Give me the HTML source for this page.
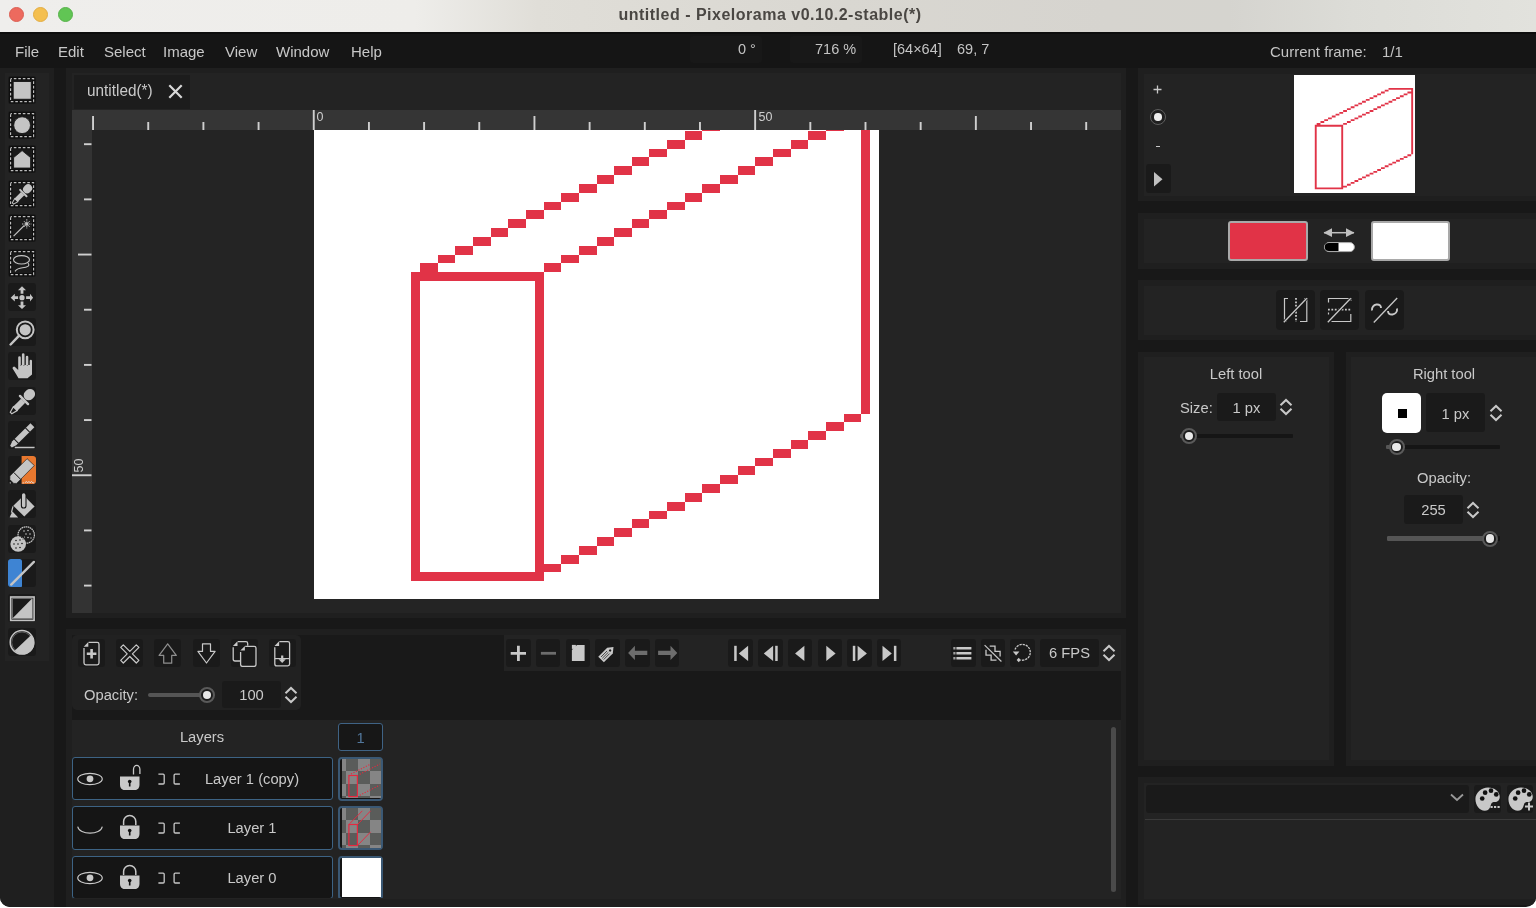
<!DOCTYPE html>
<html><head><meta charset="utf-8">
<style>
*{box-sizing:border-box;margin:0;padding:0}
html,body{width:1536px;height:908px;overflow:hidden;background:#fff;font-family:"Liberation Sans",sans-serif}
.a{position:absolute}
#win{will-change:transform;left:0;top:0;width:1536px;height:906.5px;background:#181818;border-radius:0 0 10px 10px;overflow:hidden}
#title{left:0;top:0;width:1536px;height:32px;background:linear-gradient(90deg,#efeeec 0%,#eeedea 27%,#e0ded8 35%,#d9d7d1 55%,#d6d4cf 72%,#d5d4cf 80%,#dcdcd7 88%,#e2e2dd 100%)}
.tl{top:7px;width:15px;height:15px;border-radius:50%}
#ttext{left:0;top:6px;width:1540px;text-align:center;font-weight:bold;font-size:16px;letter-spacing:0.5px;color:#4a4743}
#menu{left:0;top:32px;width:1536px;height:36px;background:#151515;border-top:2px solid #0d0d0d}
.mi{top:43px;font-size:15px;color:#c8c8c8}
.st{top:41px;font-size:14.5px;color:#c4c4c4}
.pan{background:#1f1f1f}
.inn{background:#232323}
.tb{width:28px;height:28px;background:#1a1a1a;border-radius:3px;overflow:hidden}
.tb svg{display:block}
.bt{background:#1a1a1a;border-radius:3px}
.bt svg{display:block}
.txt{color:#c9c9c9;font-size:15.5px;transform:scaleX(0.95);transform-origin:0 0;white-space:nowrap}
</style></head><body>
<div id="win" class="a">
  <div id="title" class="a"></div>
  <div class="a tl" style="left:8.5px;background:#ed6a5e;border:1px solid #dc5f53"></div>
  <div class="a tl" style="left:33px;background:#f4bf4f;border:1px solid #e3ad43"></div>
  <div class="a tl" style="left:58px;background:#61c554;border:1px solid #57b34a"></div>
  <div id="ttext" class="a">untitled - Pixelorama v0.10.2-stable(*)</div>
  <div id="menu" class="a"></div>
  <div class="a" style="left:690px;top:36px;width:72px;height:27px;background:#181818;border-radius:3px"></div>
  <div class="a" style="left:790px;top:36px;width:72px;height:27px;background:#181818;border-radius:3px"></div>
  <div class="a mi" style="left:15px">File</div>
  <div class="a mi" style="left:58px">Edit</div>
  <div class="a mi" style="left:104px">Select</div>
  <div class="a mi" style="left:163px">Image</div>
  <div class="a mi" style="left:225px">View</div>
  <div class="a mi" style="left:276px">Window</div>
  <div class="a mi" style="left:351px">Help</div>
  <div class="a st" style="left:738px">0 °</div>
  <div class="a st" style="left:815px">716 %</div>
  <div class="a st" style="left:893px">[64×64]</div>
  <div class="a st" style="left:957px">69, 7</div>
  <div class="a st" style="left:1270px;top:43px;font-size:15px">Current frame:</div>
  <div class="a st" style="left:1382px;top:43px;font-size:15px">1/1</div>

  <!-- tool panel -->
  <div class="a pan" style="left:0;top:68px;width:54px;height:840px"></div>
  <div class="a inn" style="left:5px;top:73px;width:44.4px;height:587.7px"></div>

<div class="a tb" style="left:8px;top:76.0px"><svg width="28" height="28" viewBox="0 0 28 28"><rect x="2.6" y="2.6" width="23" height="23" fill="none" stroke="#0e0e0e" stroke-width="3.2"/><rect x="2.6" y="2.6" width="23" height="23" fill="none" stroke="#bdbdbd" stroke-width="1.15" stroke-dasharray="2.6 1.9" stroke-dashoffset="1.3"/><rect x="5.2" y="5.6" width="18" height="17.6" fill="#c4c4c4" stroke="#0e0e0e" stroke-width="0.8"/></svg></div>
<div class="a tb" style="left:8px;top:110.5px"><svg width="28" height="28" viewBox="0 0 28 28"><rect x="2.6" y="2.6" width="23" height="23" fill="none" stroke="#0e0e0e" stroke-width="3.2"/><rect x="2.6" y="2.6" width="23" height="23" fill="none" stroke="#bdbdbd" stroke-width="1.15" stroke-dasharray="2.6 1.9" stroke-dashoffset="1.3"/><circle cx="14.1" cy="14.2" r="8.4" fill="#c4c4c4" stroke="#0e0e0e" stroke-width="0.8"/></svg></div>
<div class="a tb" style="left:8px;top:145.0px"><svg width="28" height="28" viewBox="0 0 28 28"><rect x="2.6" y="2.6" width="23" height="23" fill="none" stroke="#0e0e0e" stroke-width="3.2"/><rect x="2.6" y="2.6" width="23" height="23" fill="none" stroke="#bdbdbd" stroke-width="1.15" stroke-dasharray="2.6 1.9" stroke-dashoffset="1.3"/><path d="M5.6 23V12.6L14.1 5.6L22.6 12.6V23Z" fill="#c4c4c4" stroke="#0e0e0e" stroke-width="0.8"/></svg></div>
<div class="a tb" style="left:8px;top:179.5px"><svg width="28" height="28" viewBox="0 0 28 28"><rect x="2.6" y="2.6" width="23" height="23" fill="none" stroke="#0e0e0e" stroke-width="3.2"/><rect x="2.6" y="2.6" width="23" height="23" fill="none" stroke="#bdbdbd" stroke-width="1.15" stroke-dasharray="2.6 1.9" stroke-dashoffset="1.3"/><g transform="translate(4.6 23.8) rotate(-45) scale(0.8)"><path d="M0.6 -1.1L6.6 -2.7V2.7L0.6 1.1Z" fill="none" stroke="#c4c4c4" stroke-width="1.2"/><rect x="6.4" y="-2.9" width="11.4" height="5.8" fill="#c4c4c4"/><rect x="17.7" y="-6.9" width="2.5" height="13.8" rx="1.2" fill="#c4c4c4"/><rect x="20.6" y="-5" width="11.9" height="10" rx="4.9" fill="#c4c4c4"/></g></svg></div>
<div class="a tb" style="left:8px;top:214.0px"><svg width="28" height="28" viewBox="0 0 28 28"><rect x="2.6" y="2.6" width="23" height="23" fill="none" stroke="#0e0e0e" stroke-width="3.2"/><rect x="2.6" y="2.6" width="23" height="23" fill="none" stroke="#bdbdbd" stroke-width="1.15" stroke-dasharray="2.6 1.9" stroke-dashoffset="1.3"/><path d="M5.6 22.2L16.4 11.4" stroke="#c4c4c4" stroke-width="1.2"/><path d="M18.8 5.2v9.6M14 10h9.6" stroke="#c4c4c4" stroke-width="1" stroke-dasharray="1.4 .9"/><circle cx="18.8" cy="10" r="1.7" fill="#c4c4c4"/><path d="M15.8 7l6 6M21.8 7l-6 6" stroke="#c4c4c4" stroke-width=".8"/></svg></div>
<div class="a tb" style="left:8px;top:248.5px"><svg width="28" height="28" viewBox="0 0 28 28"><rect x="2.6" y="2.6" width="23" height="23" fill="none" stroke="#0e0e0e" stroke-width="3.2"/><rect x="2.6" y="2.6" width="23" height="23" fill="none" stroke="#bdbdbd" stroke-width="1.15" stroke-dasharray="2.6 1.9" stroke-dashoffset="1.3"/><ellipse cx="13.5" cy="10.8" rx="8" ry="4.2" fill="none" stroke="#c4c4c4" stroke-width="1.1"/><path d="M20 14c2.5 3-1 4.3-5.5 4.8c-3.5.4-6 1.6-7.5 3.5" fill="none" stroke="#c4c4c4" stroke-width="1.1"/></svg></div>
<div class="a tb" style="left:8px;top:283.0px"><svg width="28" height="28" viewBox="0 0 28 28"><path d="M14 3.3L18 7.2H15.4V10.8H12.6V7.2H10z M14 26.1L18 22.2H15.4V18.4H12.6V22.2H10z M2.7 14.7L6.8 10.8V13.3H10.1V16.1H6.8V18.6z M25.1 14.7L22 10.8V13.3H18.1V16.1H22V18.6z" fill="#c4c4c4"/><circle cx="14" cy="14.7" r="2.6" fill="#c4c4c4"/></svg></div>
<div class="a tb" style="left:8px;top:317.5px"><svg width="28" height="28" viewBox="0 0 28 28"><path d="M2.6 26.5L11.1 17.6" stroke="#c4c4c4" stroke-width="2.5" stroke-linecap="round"/><circle cx="17.2" cy="11.8" r="8.4" fill="none" stroke="#c4c4c4" stroke-width="2"/><circle cx="17.2" cy="11.8" r="5.6" fill="#c4c4c4"/></svg></div>
<div class="a tb" style="left:8px;top:352.0px"><svg width="28" height="28" viewBox="0 0 28 28"><path d="M10.2 13V5.5a1.3 1.3 0 0 1 2.6 0V13h1.1V2.6a1.3 1.3 0 0 1 2.6 0V13h1.3V5a1.25 1.25 0 0 1 2.5 0V13h1.4V9a1.15 1.15 0 0 1 2.3 0V22.5L19.5 26.2H10.5L8 22L4.6 16.6a1.5 1.5 0 0 1 2.4-1.6L10.2 18Z" fill="#c4c4c4"/><path d="M12.8 13v1M15.9 13v1M19.3 13v1" stroke="#181818" stroke-width=".5"/></svg></div>
<div class="a tb" style="left:8px;top:386.5px"><svg width="28" height="28" viewBox="0 0 28 28"><g transform="translate(2.6 26.4) rotate(-45) scale(1.0)"><path d="M0.6 -1.1L6.6 -2.7V2.7L0.6 1.1Z" fill="none" stroke="#c4c4c4" stroke-width="1.2"/><rect x="6.4" y="-2.9" width="11.4" height="5.8" fill="#c4c4c4"/><rect x="17.7" y="-6.9" width="2.5" height="13.8" rx="1.2" fill="#c4c4c4"/><rect x="20.6" y="-5" width="11.9" height="10" rx="4.9" fill="#c4c4c4"/></g></svg></div>
<div class="a tb" style="left:8px;top:421.0px"><svg width="28" height="28" viewBox="0 0 28 28"><g transform="translate(3 25.6) rotate(-45)"><path d="M0 -1.2L4.6 -2.8H30.3V2.8H4.6L0 1.2Z" fill="#c4c4c4"/><path d="M7.7 -3v6M23.4 -3v6" stroke="#181818" stroke-width="1"/></g><path d="M6.8 26.5h19.8" stroke="#c4c4c4" stroke-width="1.7"/></svg></div>
<div class="a tb" style="left:8px;top:455.5px"><svg width="28" height="28" viewBox="0 0 28 28"><path d="M13.6 0h12.4a2.5 2.5 0 0 1 2.5 2.5V26a2.5 2.5 0 0 1-2.5 2.5H13.6z" fill="#e8782f"/><path d="M19.1 2.7L26.3 9.5L8.6 27.4H5.7L1.9 23.6V20Z" fill="#c4c4c4" stroke="#141414" stroke-width=".6"/><path d="M5.7 16.4L12.6 23.3" stroke="#141414" stroke-width="1"/><path d="M14.5 26.9h1.4M17 26.9l1.3-1.5l1.3 1.5l1.3-1.5l1.3 1.5l1.3-1.5l1.3 1.5h1.5" fill="none" stroke="#e0e0e0" stroke-width=".9"/><circle cx="2.3" cy="26.9" r=".7" fill="#c4c4c4"/></svg></div>
<div class="a tb" style="left:8px;top:490.0px"><svg width="28" height="28" viewBox="0 0 28 28"><path d="M5.3 15.8L15.8 5.6L26.6 16.4L16.3 26.4Z" fill="#c4c4c4"/><rect x="13.4" y="2.6" width="4.6" height="15.4" rx="2.3" fill="#c4c4c4" stroke="#141414" stroke-width="1.1"/><path d="M5 16.4L3.4 22.6" stroke="#c4c4c4" stroke-width="1.2"/><path d="M4.4 21.6L1.5 27.4H10.2Z" fill="#c4c4c4"/></svg></div>
<div class="a tb" style="left:8px;top:524.5px"><svg width="28" height="28" viewBox="0 0 28 28"><circle cx="18.2" cy="10" r="8.2" fill="#1c1c1c" stroke="#c4c4c4" stroke-width="1.2" stroke-dasharray="1.6 .5"/><circle cx="10.2" cy="19" r="7.8" fill="#c4c4c4"/><g fill="#1a1a1a"><circle cx="8" cy="15.5" r=".8"/><circle cx="12" cy="15" r=".8"/><circle cx="6" cy="19" r=".8"/><circle cx="10" cy="19" r=".8"/><circle cx="14" cy="18.5" r=".8"/><circle cx="8" cy="23" r=".8"/><circle cx="12" cy="22.5" r=".8"/><circle cx="15" cy="14" r=".6"/><circle cx="13.5" cy="12.5" r=".6"/></g><g fill="#c4c4c4"><circle cx="16" cy="6" r=".8"/><circle cx="20" cy="5.5" r=".8"/><circle cx="18" cy="9" r=".8"/><circle cx="22" cy="9" r=".8"/><circle cx="20" cy="12.5" r=".8"/><circle cx="23" cy="13" r=".7"/><circle cx="16.5" cy="12" r=".6"/></g></svg></div>
<div class="a tb" style="left:8px;top:559.0px"><svg width="28" height="28" viewBox="0 0 28 28"><rect x="-0.6" y="0" width="14.6" height="29" rx="2.5" fill="#3e84d3"/><path d="M3.2 25.6L25.9 2.9" stroke="#c4c4c4" stroke-width="2.4" stroke-linecap="round"/></svg></div>
<div class="a tb" style="left:8px;top:593.5px"><svg width="28" height="28" viewBox="0 0 28 28"><rect x="2.7" y="3" width="23.4" height="23.4" fill="none" stroke="#c4c4c4" stroke-width="1.6"/><rect x="4.4" y="4.7" width="20" height="20" fill="none" stroke="#9a9a9a" stroke-width=".6"/><path d="M4.6 24.3L24.1 4.5V24.3Z" fill="#c4c4c4"/></svg></div>
<div class="a tb" style="left:8px;top:628.0px"><svg width="28" height="28" viewBox="0 0 28 28"><circle cx="14" cy="14.3" r="11.8" fill="none" stroke="#c4c4c4" stroke-width="1.5"/><circle cx="14" cy="14.3" r="10.3" fill="none" stroke="#8a8a8a" stroke-width=".6"/><path d="M6.6 22.8A10.4 10.4 0 0 0 23.2 7.1Z" fill="#c4c4c4"/></svg></div>
  <!-- main canvas panel -->
  <div class="a pan" style="left:66px;top:68px;width:1060px;height:550px"></div>
  <div class="a inn" style="left:72px;top:73px;width:1049px;height:540px"></div>
  <div class="a" style="left:74px;top:75px;width:116px;height:34px;background:#1c1c1c"></div>
  <div class="a txt" style="left:86.5px;top:81px;font-size:16.5px;transform:scaleX(0.93)">untitled(*)</div>
  <svg class="a" style="left:168px;top:84px" width="15" height="15" viewBox="0 0 15 15"><path d="M1.3 1.3L13.7 13.7M13.7 1.3L1.3 13.7" stroke="#d8d8d8" stroke-width="2.2"/></svg>
  <div class="a" style="left:72px;top:110px;width:1049px;height:20px;background:#353535"></div>
  <div class="a" style="left:72px;top:130px;width:20px;height:483px;background:#333"></div>
  <div class="a" style="left:92px;top:130px;width:1029px;height:483px;background:#242424"></div>
  <div class="a" style="left:314px;top:130px;width:565px;height:469px;background:#fff"></div>

<svg class="a" style="left:0;top:0" width="1536" height="908" viewBox="0 0 1536 908">
<defs><clipPath id="cv"><rect x="314" y="130" width="565" height="469"/></clipPath></defs>
<g clip-path="url(#cv)"><svg x="314" y="33.9" width="565" height="565" viewBox="0 0 64 64" shape-rendering="crispEdges"><path fill="#e13347" d="M50 7h13v1h-13zM48 8h2v1h-2zM62 8h1v1h-1zM46 9h2v1h-2zM60 9h3v1h-3zM44 10h2v1h-2zM58 10h2v1h-2zM62 10h1v1h-1zM42 11h2v1h-2zM56 11h2v1h-2zM62 11h1v1h-1zM40 12h2v1h-2zM54 12h2v1h-2zM62 12h1v1h-1zM38 13h2v1h-2zM52 13h2v1h-2zM62 13h1v1h-1zM36 14h2v1h-2zM50 14h2v1h-2zM62 14h1v1h-1zM34 15h2v1h-2zM48 15h2v1h-2zM62 15h1v1h-1zM32 16h2v1h-2zM46 16h2v1h-2zM62 16h1v1h-1zM30 17h2v1h-2zM44 17h2v1h-2zM62 17h1v1h-1zM28 18h2v1h-2zM42 18h2v1h-2zM62 18h1v1h-1zM26 19h2v1h-2zM40 19h2v1h-2zM62 19h1v1h-1zM24 20h2v1h-2zM38 20h2v1h-2zM62 20h1v1h-1zM22 21h2v1h-2zM36 21h2v1h-2zM62 21h1v1h-1zM20 22h2v1h-2zM34 22h2v1h-2zM62 22h1v1h-1zM18 23h2v1h-2zM32 23h2v1h-2zM62 23h1v1h-1zM16 24h2v1h-2zM30 24h2v1h-2zM62 24h1v1h-1zM14 25h2v1h-2zM28 25h2v1h-2zM62 25h1v1h-1zM12 26h2v1h-2zM26 26h2v1h-2zM62 26h1v1h-1zM11 27h15v1h-15zM62 27h1v1h-1zM11 28h1v1h-1zM25 28h1v1h-1zM62 28h1v1h-1zM11 29h1v1h-1zM25 29h1v1h-1zM62 29h1v1h-1zM11 30h1v1h-1zM25 30h1v1h-1zM62 30h1v1h-1zM11 31h1v1h-1zM25 31h1v1h-1zM62 31h1v1h-1zM11 32h1v1h-1zM25 32h1v1h-1zM62 32h1v1h-1zM11 33h1v1h-1zM25 33h1v1h-1zM62 33h1v1h-1zM11 34h1v1h-1zM25 34h1v1h-1zM62 34h1v1h-1zM11 35h1v1h-1zM25 35h1v1h-1zM62 35h1v1h-1zM11 36h1v1h-1zM25 36h1v1h-1zM62 36h1v1h-1zM11 37h1v1h-1zM25 37h1v1h-1zM62 37h1v1h-1zM11 38h1v1h-1zM25 38h1v1h-1zM62 38h1v1h-1zM11 39h1v1h-1zM25 39h1v1h-1zM62 39h1v1h-1zM11 40h1v1h-1zM25 40h1v1h-1zM62 40h1v1h-1zM11 41h1v1h-1zM25 41h1v1h-1zM62 41h1v1h-1zM11 42h1v1h-1zM25 42h1v1h-1zM62 42h1v1h-1zM11 43h1v1h-1zM25 43h1v1h-1zM60 43h2v1h-2zM11 44h1v1h-1zM25 44h1v1h-1zM58 44h2v1h-2zM11 45h1v1h-1zM25 45h1v1h-1zM56 45h2v1h-2zM11 46h1v1h-1zM25 46h1v1h-1zM54 46h2v1h-2zM11 47h1v1h-1zM25 47h1v1h-1zM52 47h2v1h-2zM11 48h1v1h-1zM25 48h1v1h-1zM50 48h2v1h-2zM11 49h1v1h-1zM25 49h1v1h-1zM48 49h2v1h-2zM11 50h1v1h-1zM25 50h1v1h-1zM46 50h2v1h-2zM11 51h1v1h-1zM25 51h1v1h-1zM44 51h2v1h-2zM11 52h1v1h-1zM25 52h1v1h-1zM42 52h2v1h-2zM11 53h1v1h-1zM25 53h1v1h-1zM40 53h2v1h-2zM11 54h1v1h-1zM25 54h1v1h-1zM38 54h2v1h-2zM11 55h1v1h-1zM25 55h1v1h-1zM36 55h2v1h-2zM11 56h1v1h-1zM25 56h1v1h-1zM34 56h2v1h-2zM11 57h1v1h-1zM25 57h1v1h-1zM32 57h2v1h-2zM11 58h1v1h-1zM25 58h1v1h-1zM30 58h2v1h-2zM11 59h1v1h-1zM25 59h1v1h-1zM28 59h2v1h-2zM11 60h1v1h-1zM25 60h3v1h-3zM11 61h15v1h-15z"/></svg></g>
<g fill="#cfcfcf"><rect x="92.10" y="116" width="1.9" height="14"/><rect x="147.28" y="122" width="1.9" height="8"/><rect x="202.45" y="122" width="1.9" height="8"/><rect x="257.62" y="122" width="1.9" height="8"/><rect x="312.80" y="110" width="1.9" height="20"/><rect x="367.98" y="122" width="1.9" height="8"/><rect x="423.15" y="122" width="1.9" height="8"/><rect x="478.32" y="122" width="1.9" height="8"/><rect x="533.50" y="116" width="1.9" height="14"/><rect x="588.67" y="122" width="1.9" height="8"/><rect x="643.85" y="122" width="1.9" height="8"/><rect x="699.02" y="122" width="1.9" height="8"/><rect x="754.20" y="110" width="1.9" height="20"/><rect x="809.38" y="122" width="1.9" height="8"/><rect x="864.55" y="122" width="1.9" height="8"/><rect x="919.72" y="122" width="1.9" height="8"/><rect x="974.90" y="116" width="1.9" height="14"/><rect x="1030.08" y="122" width="1.9" height="8"/><rect x="1085.25" y="122" width="1.9" height="8"/><rect x="84" y="143.25" width="7.5" height="1.9"/><rect x="84" y="198.42" width="7.5" height="1.9"/><rect x="78" y="253.60" width="13.5" height="1.9"/><rect x="84" y="308.77" width="7.5" height="1.9"/><rect x="84" y="363.95" width="7.5" height="1.9"/><rect x="84" y="419.12" width="7.5" height="1.9"/><rect x="72" y="474.30" width="19.5" height="1.9"/><rect x="84" y="529.48" width="7.5" height="1.9"/><rect x="84" y="584.65" width="7.5" height="1.9"/></g>
<text x="316.5" y="121.2" font-size="12.5" fill="#cfcfcf" font-family="Liberation Sans">0</text>
<text x="758.5" y="121.2" font-size="12.5" fill="#cfcfcf" font-family="Liberation Sans">50</text>
<text transform="translate(82.5,472.5) rotate(-90)" font-size="12.5" fill="#cfcfcf" font-family="Liberation Sans">50</text>
</svg>

  <!-- timeline panel -->
  <div class="a pan" style="left:66px;top:629px;width:1060px;height:279px"></div>
  <div class="a" style="left:72px;top:635px;width:1049px;height:85px;background:#191919"></div>
  <div class="a inn" style="left:72px;top:720px;width:1049px;height:179px"></div>

<div class="a" style="left:72px;top:635px;width:229px;height:75px;background:#212121;border-radius:5px"></div>
<div class="a bt" style="left:77.7px;top:639px;width:27px;height:28px"><svg width="27" height="28" viewBox="0 0 27 28"><path d="M10.6 3.4H19.2Q21 3.4 21 5.2V24.099999999999998Q21 25.9 19.2 25.9H7.8Q6 25.9 6 24.099999999999998V9.0" fill="none" stroke="#c8c8c8" stroke-width="1.3"/><path d="M5.7 7.699999999999999L10.3 3.1V7.699999999999999Z" fill="#c8c8c8"/><path d="M13.6 10v9.6M8.8 14.8h9.6" stroke="#c8c8c8" stroke-width="2.6"/></svg></div>
<div class="a bt" style="left:116.0px;top:639px;width:27px;height:28px"><svg width="27" height="28" viewBox="0 0 27 28"><path d="M7.3 5.8l6.5 6.5l6.5-6.5l2.6 2.6l-6.5 6.5l6.5 6.5l-2.6 2.6l-6.5-6.5l-6.5 6.5l-2.6-2.6l6.5-6.5l-6.5-6.5z" fill="none" stroke="#c8c8c8" stroke-width="1.2" stroke-linejoin="round"/></svg></div>
<div class="a bt" style="left:154.3px;top:639px;width:27px;height:28px"><svg width="27" height="28" viewBox="0 0 27 28"><path d="M13.7 4.8l-8.6 11.6h4.6v7.8h8v-7.8h4.6z" fill="none" stroke="#8f8f8f" stroke-width="1.2" stroke-linejoin="round"/></svg></div>
<div class="a bt" style="left:192.6px;top:639px;width:27px;height:28px"><svg width="27" height="28" viewBox="0 0 27 28"><path d="M13.5 24l-8.6-11.6h4.6V4.8h8v7.6h4.6z" fill="none" stroke="#c8c8c8" stroke-width="1.2" stroke-linejoin="round"/></svg></div>
<div class="a bt" style="left:230.9px;top:639px;width:27px;height:28px"><svg width="27" height="28" viewBox="0 0 27 28"><path d="M6.8 2.6H14.899999999999999Q16.7 2.6 16.7 4.4V20.2Q16.7 22 14.899999999999999 22H4.0Q2.2 22 2.2 20.2V8.2" fill="none" stroke="#c8c8c8" stroke-width="1.3"/><path d="M1.9000000000000001 6.9L6.5 2.3000000000000003V6.9Z" fill="#c8c8c8"/><rect x="9" y="6.7" width="16.6" height="21.3" fill="#1a1a1a"/><path d="M14.2 7.3H23.2Q25 7.3 25 9.1V25.599999999999998Q25 27.4 23.2 27.4H11.4Q9.6 27.4 9.6 25.599999999999998V12.899999999999999" fill="none" stroke="#c8c8c8" stroke-width="1.3"/><path d="M9.299999999999999 11.6L13.899999999999999 7.0V11.6Z" fill="#c8c8c8"/></svg></div>
<div class="a bt" style="left:269.2px;top:639px;width:27px;height:28px"><svg width="27" height="28" viewBox="0 0 27 28"><path d="M10.399999999999999 2.6H18.8Q20.6 2.6 20.6 4.4V25.099999999999998Q20.6 26.9 18.8 26.9H7.6Q5.8 26.9 5.8 25.099999999999998V8.2" fill="none" stroke="#c8c8c8" stroke-width="1.3"/><path d="M5.5 6.9L10.1 2.3000000000000003V6.9Z" fill="#c8c8c8"/><path d="M5.8 19.6h14.8" stroke="#c8c8c8" stroke-width="1.2"/><path d="M13.2 16.5v4.5" stroke="#c8c8c8" stroke-width="2.2"/><path d="M9.6 20.2h7.2l-3.6 3.8z" fill="#c8c8c8"/></svg></div>
<div class="a txt" style="left:84px;top:686px">Opacity:</div>
<div class="a" style="left:148px;top:693px;width:62px;height:4px;background:#555;border-radius:2px"></div>
<div class="a" style="left:199px;top:687px;width:16px;height:16px;border-radius:50%;background:#1c1c1c;border:2px solid #5a5a5a"></div>
<div class="a" style="left:202.8px;top:690.8px;width:8.4px;height:8.4px;border-radius:50%;background:#e8e8e8"></div>
<div class="a bt" style="left:222px;top:681px;width:59px;height:27px"></div>
<div class="a txt" style="left:222px;top:686px;width:59px;text-align:center;transform-origin:50% 0">100</div>
<svg class="a" style="left:284px;top:685px" width="14" height="20" viewBox="0 0 14 20"><path d="M1.5 8.3L7 3L12.5 8.3M1.5 11.7L7 17L12.5 11.7" fill="none" stroke="#c8c8c8" stroke-width="2"/></svg>
<div class="a" style="left:504px;top:635px;width:617px;height:36px;background:#232323"></div>
<div class="a bt" style="left:506.2px;top:639px;width:24.5px;height:28px"><svg width="24.5" height="28" viewBox="0 0 24.5 28"><path d="M12.4 6.8v15.3M4.7 14.4h15.3" stroke="#c8c8c8" stroke-width="2.8"/></svg></div>
<div class="a bt" style="left:535.9px;top:639px;width:24.5px;height:28px"><svg width="24.5" height="28" viewBox="0 0 24.5 28"><path d="M4.9 14.3h15.1" stroke="#6d6d6d" stroke-width="2.8"/></svg></div>
<div class="a bt" style="left:565.6px;top:639px;width:24.5px;height:28px"><svg width="24.5" height="28" viewBox="0 0 24.5 28"><path d="M11 5.9h7.6v16.1H5.9V11z" fill="#c8c8c8"/><path d="M5.9 5.9h4v4h-4z" fill="#c8c8c8"/></svg></div>
<div class="a bt" style="left:595.3px;top:639px;width:24.5px;height:28px"><svg width="24.5" height="28" viewBox="0 0 24.5 28"><g transform="rotate(-45 12.25 14.35)"><path d="M3.5 10.4h12.6l5 3.95l-5 3.95H3.5z" fill="#c8c8c8"/><circle cx="16.3" cy="14.35" r="1.2" fill="#1a1a1a"/><path d="M5.3 12.5h8.5M5.3 14.35h8.5M5.3 16.2h8.5" stroke="#1a1a1a" stroke-width=".7"/></g></svg></div>
<div class="a bt" style="left:625.0px;top:639px;width:24.5px;height:28px"><svg width="24.5" height="28" viewBox="0 0 24.5 28"><path d="M3.1 13.9l6.8-7.1v4.9h12.4v4.4H9.9V21z" fill="#6d6d6d"/></svg></div>
<div class="a bt" style="left:654.7px;top:639px;width:24.5px;height:28px"><svg width="24.5" height="28" viewBox="0 0 24.5 28"><path d="M22.3 13.9l-6.8-7.1v4.9H3.1v4.4h12.4V21z" fill="#6d6d6d"/></svg></div>
<div class="a bt" style="left:728.4px;top:639px;width:24.5px;height:28px"><svg width="24.5" height="28" viewBox="0 0 24.5 28"><rect x="6.2" y="6.8" width="2.5" height="15.2" fill="#c8c8c8"/><path d="M20.1 6.8v15.2l-9.3-7.6z" fill="#c8c8c8"/></svg></div>
<div class="a bt" style="left:758.1px;top:639px;width:24.5px;height:28px"><svg width="24.5" height="28" viewBox="0 0 24.5 28"><path d="M15.1 6.8v15.2l-9.3-7.6z" fill="#c8c8c8"/><rect x="17.2" y="6.8" width="2.5" height="15.2" fill="#c8c8c8"/></svg></div>
<div class="a bt" style="left:787.8px;top:639px;width:24.5px;height:28px"><svg width="24.5" height="28" viewBox="0 0 24.5 28"><path d="M16.4 6.8v15.2l-9.3-7.6z" fill="#c8c8c8"/></svg></div>
<div class="a bt" style="left:817.5px;top:639px;width:24.5px;height:28px"><svg width="24.5" height="28" viewBox="0 0 24.5 28"><path d="M8.3 6.8v15.2l9.3-7.6z" fill="#c8c8c8"/></svg></div>
<div class="a bt" style="left:847.2px;top:639px;width:24.5px;height:28px"><svg width="24.5" height="28" viewBox="0 0 24.5 28"><rect x="5.8" y="6.8" width="2.5" height="15.2" fill="#c8c8c8"/><path d="M10.6 6.8v15.2l9.3-7.6z" fill="#c8c8c8"/></svg></div>
<div class="a bt" style="left:876.9px;top:639px;width:24.5px;height:28px"><svg width="24.5" height="28" viewBox="0 0 24.5 28"><path d="M5.5 6.8v15.2l9.3-7.6z" fill="#c8c8c8"/><rect x="16.9" y="6.8" width="2.5" height="15.2" fill="#c8c8c8"/></svg></div>
<div class="a bt" style="left:951.0px;top:639px;width:24.5px;height:28px"><svg width="24.5" height="28" viewBox="0 0 24.5 28"><path d="M5.4 9.3h15M5.4 14.2h15M5.4 19.2h15" stroke="#c8c8c8" stroke-width="2.6"/><path d="M2.3 9.3h2.2M2.3 14.2h2.2M2.3 19.2h2.2" stroke="#a0a0a0" stroke-width="2.6"/></svg></div>
<div class="a bt" style="left:980.7px;top:639px;width:24.5px;height:28px"><svg width="24.5" height="28" viewBox="0 0 24.5 28"><path d="M8.7 7.2H14v5.1h5.1v5.3M5 10.8v5.3h5.1v5.1h5.4" fill="none" stroke="#c8c8c8" stroke-width="1.3"/><path d="M3.6 6.1L20.4 22.5" stroke="#c8c8c8" stroke-width="1.2"/></svg></div>
<div class="a bt" style="left:1010.4px;top:639px;width:24.5px;height:28px"><svg width="24.5" height="28" viewBox="0 0 24.5 28"><path d="M5 10.5A7.9 7.9 0 1 1 10.5 21" fill="none" stroke="#c8c8c8" stroke-width="1.3" stroke-dasharray="2.3 .9"/><path d="M2.8 12.4h6.6l-3.3 4.2z" fill="#c8c8c8"/><path d="M8.7 18.8l2 2.2l-2 2.2l-2-2.2z" fill="#c8c8c8"/></svg></div>
<div class="a bt" style="left:1040px;top:639px;width:59px;height:28px"></div>
<div class="a txt" style="left:1040px;top:644px;width:59px;text-align:center;transform-origin:50% 0">6 FPS</div>
<svg class="a" style="left:1101.5px;top:643px" width="14" height="20" viewBox="0 0 14 20"><path d="M1.5 8.3L7 3L12.5 8.3M1.5 11.7L7 17L12.5 11.7" fill="none" stroke="#c8c8c8" stroke-width="2"/></svg>
<div class="a txt" style="left:72px;top:728px;width:260px;text-align:center;transform-origin:50% 0">Layers</div>
<div class="a" style="left:338px;top:723px;width:45px;height:28px;background:#171717;border:1px solid #3f6385;border-radius:3px"></div>
<div class="a txt" style="left:338px;top:729px;width:45px;text-align:center;transform-origin:50% 0;color:#52779c">1</div>
<div class="a" style="left:0;top:0;width:1536px;height:898px;overflow:hidden">
<div class="a" style="left:72px;top:756.5px;width:261px;height:43.5px;background:#151515;border:1px solid #3d6384;border-radius:3px"></div>
<svg class="a" style="left:76px;top:770.5px" width="28" height="16" viewBox="0 0 28 16"><ellipse cx="14" cy="8" rx="12.3" ry="5.6" fill="none" stroke="#c8c8c8" stroke-width="1.1"/><circle cx="14" cy="7.8" r="3.4" fill="#c8c8c8"/></svg>
<svg class="a" style="left:119px;top:763.5px" width="24" height="28" viewBox="0 0 24 28"><path d="M14.5 10.5V5.5a3.2 4.2 0 0 1 6.4 0V10" fill="none" stroke="#c8c8c8" stroke-width="1.3"/><path d="M1 12.5h19.5v8c0 3-1.5 5.5-4.5 5.5h-10.5c-3 0-4.5-2.5-4.5-5.5z" fill="#c8c8c8"/><circle cx="10.7" cy="17.5" r="1.8" fill="#111"/><path d="M10.7 17.5v5" stroke="#111" stroke-width="1.6"/></svg>
<svg class="a" style="left:156px;top:771.5px" width="26" height="14" viewBox="0 0 26 14"><path d="M2.4 2.1H7.1Q8.2 2.1 8.2 3.2V10.9Q8.2 12 7.1 12H2.4M23.9 2.1H19.2Q18.1 2.1 18.1 3.2V10.9Q18.1 12 19.2 12H23.9" fill="none" stroke="#c8c8c8" stroke-width="1.3"/></svg>
<div class="a txt" style="left:182px;top:769.5px;width:140px;text-align:center;transform-origin:50% 0">Layer 1 (copy)</div>
<div class="a" style="left:338.3px;top:756.5px;width:44.6px;height:44px;border:2px solid #3a5874;border-radius:4px;background:#151515"></div>
<svg class="a" style="left:341.5px;top:758.5px" width="39.5" height="39.5" viewBox="0 0 39.5 39.5"><rect shape-rendering="crispEdges" x="0" y="0" width="4.0" height="12.1" fill="#858585"/><rect shape-rendering="crispEdges" x="0" y="12.1" width="4.0" height="12.6" fill="#5a5c5a"/><rect shape-rendering="crispEdges" x="0" y="24.7" width="4.0" height="12.7" fill="#858585"/><rect shape-rendering="crispEdges" x="0" y="37.4" width="4.0" height="2.1" fill="#5a5c5a"/><rect shape-rendering="crispEdges" x="4" y="0" width="12.1" height="12.1" fill="#5a5c5a"/><rect shape-rendering="crispEdges" x="4" y="12.1" width="12.1" height="12.6" fill="#858585"/><rect shape-rendering="crispEdges" x="4" y="24.7" width="12.1" height="12.7" fill="#5a5c5a"/><rect shape-rendering="crispEdges" x="4" y="37.4" width="12.1" height="2.1" fill="#858585"/><rect shape-rendering="crispEdges" x="16.1" y="0" width="12.2" height="12.1" fill="#858585"/><rect shape-rendering="crispEdges" x="16.1" y="12.1" width="12.2" height="12.6" fill="#5a5c5a"/><rect shape-rendering="crispEdges" x="16.1" y="24.7" width="12.2" height="12.7" fill="#858585"/><rect shape-rendering="crispEdges" x="16.1" y="37.4" width="12.2" height="2.1" fill="#5a5c5a"/><rect shape-rendering="crispEdges" x="28.3" y="0" width="11.2" height="12.1" fill="#5a5c5a"/><rect shape-rendering="crispEdges" x="28.3" y="12.1" width="11.2" height="12.6" fill="#858585"/><rect shape-rendering="crispEdges" x="28.3" y="24.7" width="11.2" height="12.7" fill="#5a5c5a"/><rect shape-rendering="crispEdges" x="28.3" y="37.4" width="11.2" height="2.1" fill="#858585"/><g transform="scale(0.6156)"><g fill="none" stroke="#e8273f"><rect x="11.2" y="26.8" width="13.8" height="34.2" stroke-width="1.9"/><path d="M14.6 24.5L46.8 8.2M28.8 24.9L61.4 8.2M28.8 58.9L61.4 42.5" stroke-width="1.9" stroke-dasharray="1.9 2.6"/></g></g></svg>
<div class="a" style="left:72px;top:806px;width:261px;height:43.5px;background:#151515;border:1px solid #3d6384;border-radius:3px"></div>
<svg class="a" style="left:76px;top:820px" width="28" height="16" viewBox="0 0 28 16"><path d="M1.7 6.6C3.2 15.3 24.8 15.3 26.3 6.6" fill="none" stroke="#c8c8c8" stroke-width="1.1"/></svg>
<svg class="a" style="left:119px;top:813px" width="24" height="28" viewBox="0 0 24 28"><path d="M4.6 12V8.6a6.1 6.1 0 0 1 12.2 0V12" fill="none" stroke="#c8c8c8" stroke-width="1.5"/><path d="M1 12.5h19.5v8c0 3-1.5 5.5-4.5 5.5h-10.5c-3 0-4.5-2.5-4.5-5.5z" fill="#c8c8c8"/><circle cx="10.7" cy="17.5" r="1.8" fill="#111"/><path d="M10.7 17.5v5" stroke="#111" stroke-width="1.6"/></svg>
<svg class="a" style="left:156px;top:821px" width="26" height="14" viewBox="0 0 26 14"><path d="M2.4 2.1H7.1Q8.2 2.1 8.2 3.2V10.9Q8.2 12 7.1 12H2.4M23.9 2.1H19.2Q18.1 2.1 18.1 3.2V10.9Q18.1 12 19.2 12H23.9" fill="none" stroke="#c8c8c8" stroke-width="1.3"/></svg>
<div class="a txt" style="left:182px;top:819px;width:140px;text-align:center;transform-origin:50% 0">Layer 1</div>
<div class="a" style="left:338.3px;top:806px;width:44.6px;height:44px;border:2px solid #3a5874;border-radius:4px;background:#151515"></div>
<svg class="a" style="left:341.5px;top:808px" width="39.5" height="39.5" viewBox="0 0 39.5 39.5"><rect shape-rendering="crispEdges" x="0" y="0" width="4.0" height="12.1" fill="#858585"/><rect shape-rendering="crispEdges" x="0" y="12.1" width="4.0" height="12.6" fill="#5a5c5a"/><rect shape-rendering="crispEdges" x="0" y="24.7" width="4.0" height="12.7" fill="#858585"/><rect shape-rendering="crispEdges" x="0" y="37.4" width="4.0" height="2.1" fill="#5a5c5a"/><rect shape-rendering="crispEdges" x="4" y="0" width="12.1" height="12.1" fill="#5a5c5a"/><rect shape-rendering="crispEdges" x="4" y="12.1" width="12.1" height="12.6" fill="#858585"/><rect shape-rendering="crispEdges" x="4" y="24.7" width="12.1" height="12.7" fill="#5a5c5a"/><rect shape-rendering="crispEdges" x="4" y="37.4" width="12.1" height="2.1" fill="#858585"/><rect shape-rendering="crispEdges" x="16.1" y="0" width="12.2" height="12.1" fill="#858585"/><rect shape-rendering="crispEdges" x="16.1" y="12.1" width="12.2" height="12.6" fill="#5a5c5a"/><rect shape-rendering="crispEdges" x="16.1" y="24.7" width="12.2" height="12.7" fill="#858585"/><rect shape-rendering="crispEdges" x="16.1" y="37.4" width="12.2" height="2.1" fill="#5a5c5a"/><rect shape-rendering="crispEdges" x="28.3" y="0" width="11.2" height="12.1" fill="#5a5c5a"/><rect shape-rendering="crispEdges" x="28.3" y="12.1" width="11.2" height="12.6" fill="#858585"/><rect shape-rendering="crispEdges" x="28.3" y="24.7" width="11.2" height="12.7" fill="#5a5c5a"/><rect shape-rendering="crispEdges" x="28.3" y="37.4" width="11.2" height="2.1" fill="#858585"/><g transform="scale(0.6156)"><g fill="none" stroke="#e8273f"><rect x="11.2" y="26.8" width="13.8" height="34.2" stroke-width="1.9"/><path d="M12.4 25.5L33 4.6M25.8 26.2L46.5 4.6M25.8 60.3L46.5 38.8" stroke-width="1.5"/></g></g></svg>
<div class="a" style="left:72px;top:855.5px;width:261px;height:43.5px;background:#151515;border:1px solid #3d6384;border-radius:3px"></div>
<svg class="a" style="left:76px;top:869.5px" width="28" height="16" viewBox="0 0 28 16"><ellipse cx="14" cy="8" rx="12.3" ry="5.6" fill="none" stroke="#c8c8c8" stroke-width="1.1"/><circle cx="14" cy="7.8" r="3.4" fill="#c8c8c8"/></svg>
<svg class="a" style="left:119px;top:862.5px" width="24" height="28" viewBox="0 0 24 28"><path d="M4.6 12V8.6a6.1 6.1 0 0 1 12.2 0V12" fill="none" stroke="#c8c8c8" stroke-width="1.5"/><path d="M1 12.5h19.5v8c0 3-1.5 5.5-4.5 5.5h-10.5c-3 0-4.5-2.5-4.5-5.5z" fill="#c8c8c8"/><circle cx="10.7" cy="17.5" r="1.8" fill="#111"/><path d="M10.7 17.5v5" stroke="#111" stroke-width="1.6"/></svg>
<svg class="a" style="left:156px;top:870.5px" width="26" height="14" viewBox="0 0 26 14"><path d="M2.4 2.1H7.1Q8.2 2.1 8.2 3.2V10.9Q8.2 12 7.1 12H2.4M23.9 2.1H19.2Q18.1 2.1 18.1 3.2V10.9Q18.1 12 19.2 12H23.9" fill="none" stroke="#c8c8c8" stroke-width="1.3"/></svg>
<div class="a txt" style="left:182px;top:868.5px;width:140px;text-align:center;transform-origin:50% 0">Layer 0</div>
<div class="a" style="left:338.3px;top:855.5px;width:44.6px;height:44px;border:2px solid #3a5874;border-radius:4px;background:#151515"></div>
<div class="a" style="left:341.5px;top:857.5px;width:39.5px;height:39.5px;background:#fff"></div>
</div>
<div class="a" style="left:1111px;top:727px;width:5px;height:165px;background:#4a4a4a;border-radius:2.5px"></div>
<div class="a pan" style="left:1138px;top:68px;width:410px;height:133px"></div>
<div class="a inn" style="left:1143.5px;top:73.5px;width:399px;height:122px"></div>
<div class="a pan" style="left:1138px;top:213px;width:410px;height:55.5px"></div>
<div class="a inn" style="left:1143.5px;top:218.5px;width:399px;height:44.5px"></div>
<div class="a pan" style="left:1138px;top:280px;width:410px;height:60px"></div>
<div class="a inn" style="left:1143.5px;top:285.5px;width:399px;height:49px"></div>
<div class="a pan" style="left:1138px;top:351.5px;width:196px;height:414px"></div>
<div class="a inn" style="left:1143.5px;top:357.0px;width:185px;height:403px"></div>
<div class="a pan" style="left:1345.5px;top:351.5px;width:202px;height:414px"></div>
<div class="a inn" style="left:1351.0px;top:357.0px;width:191px;height:403px"></div>
<div class="a pan" style="left:1138px;top:777px;width:410px;height:127.6px"></div>
<div class="a inn" style="left:1143.5px;top:782.5px;width:399px;height:116.6px"></div>
<svg class="a" style="left:1150px;top:82px" width="16" height="16" viewBox="0 0 16 16"><path d="M7.5 3.5v8M3.5 7.5h8" stroke="#c8c8c8" stroke-width="1.3"/></svg>
<div class="a" style="left:1150px;top:109px;width:16px;height:16px;border-radius:50%;border:1.6px solid #5e5e5e;background:#202020"></div>
<div class="a" style="left:1154.2px;top:113.2px;width:7.6px;height:7.6px;border-radius:50%;background:#eee"></div>
<div class="a" style="left:1155.5px;top:145.6px;width:4.5px;height:1.4px;background:#c8c8c8"></div>
<div class="a bt" style="left:1146px;top:164px;width:24.5px;height:28.5px"><svg width="24.5" height="28.5" viewBox="0 0 24.5 28.5"><path d="M8 8v14.5l8.5-7.25z" fill="#c0c0c0"/></svg></div>
<svg class="a" style="left:1294px;top:75px" width="121" height="118" viewBox="0 0 64 64" preserveAspectRatio="none"><rect width="64" height="64" fill="#fff"/><path fill="#e13347" d="M50 7h13v1h-13zM48 8h2v1h-2zM62 8h1v1h-1zM46 9h2v1h-2zM60 9h3v1h-3zM44 10h2v1h-2zM58 10h2v1h-2zM62 10h1v1h-1zM42 11h2v1h-2zM56 11h2v1h-2zM62 11h1v1h-1zM40 12h2v1h-2zM54 12h2v1h-2zM62 12h1v1h-1zM38 13h2v1h-2zM52 13h2v1h-2zM62 13h1v1h-1zM36 14h2v1h-2zM50 14h2v1h-2zM62 14h1v1h-1zM34 15h2v1h-2zM48 15h2v1h-2zM62 15h1v1h-1zM32 16h2v1h-2zM46 16h2v1h-2zM62 16h1v1h-1zM30 17h2v1h-2zM44 17h2v1h-2zM62 17h1v1h-1zM28 18h2v1h-2zM42 18h2v1h-2zM62 18h1v1h-1zM26 19h2v1h-2zM40 19h2v1h-2zM62 19h1v1h-1zM24 20h2v1h-2zM38 20h2v1h-2zM62 20h1v1h-1zM22 21h2v1h-2zM36 21h2v1h-2zM62 21h1v1h-1zM20 22h2v1h-2zM34 22h2v1h-2zM62 22h1v1h-1zM18 23h2v1h-2zM32 23h2v1h-2zM62 23h1v1h-1zM16 24h2v1h-2zM30 24h2v1h-2zM62 24h1v1h-1zM14 25h2v1h-2zM28 25h2v1h-2zM62 25h1v1h-1zM12 26h2v1h-2zM26 26h2v1h-2zM62 26h1v1h-1zM11 27h15v1h-15zM62 27h1v1h-1zM11 28h1v1h-1zM25 28h1v1h-1zM62 28h1v1h-1zM11 29h1v1h-1zM25 29h1v1h-1zM62 29h1v1h-1zM11 30h1v1h-1zM25 30h1v1h-1zM62 30h1v1h-1zM11 31h1v1h-1zM25 31h1v1h-1zM62 31h1v1h-1zM11 32h1v1h-1zM25 32h1v1h-1zM62 32h1v1h-1zM11 33h1v1h-1zM25 33h1v1h-1zM62 33h1v1h-1zM11 34h1v1h-1zM25 34h1v1h-1zM62 34h1v1h-1zM11 35h1v1h-1zM25 35h1v1h-1zM62 35h1v1h-1zM11 36h1v1h-1zM25 36h1v1h-1zM62 36h1v1h-1zM11 37h1v1h-1zM25 37h1v1h-1zM62 37h1v1h-1zM11 38h1v1h-1zM25 38h1v1h-1zM62 38h1v1h-1zM11 39h1v1h-1zM25 39h1v1h-1zM62 39h1v1h-1zM11 40h1v1h-1zM25 40h1v1h-1zM62 40h1v1h-1zM11 41h1v1h-1zM25 41h1v1h-1zM62 41h1v1h-1zM11 42h1v1h-1zM25 42h1v1h-1zM62 42h1v1h-1zM11 43h1v1h-1zM25 43h1v1h-1zM60 43h2v1h-2zM11 44h1v1h-1zM25 44h1v1h-1zM58 44h2v1h-2zM11 45h1v1h-1zM25 45h1v1h-1zM56 45h2v1h-2zM11 46h1v1h-1zM25 46h1v1h-1zM54 46h2v1h-2zM11 47h1v1h-1zM25 47h1v1h-1zM52 47h2v1h-2zM11 48h1v1h-1zM25 48h1v1h-1zM50 48h2v1h-2zM11 49h1v1h-1zM25 49h1v1h-1zM48 49h2v1h-2zM11 50h1v1h-1zM25 50h1v1h-1zM46 50h2v1h-2zM11 51h1v1h-1zM25 51h1v1h-1zM44 51h2v1h-2zM11 52h1v1h-1zM25 52h1v1h-1zM42 52h2v1h-2zM11 53h1v1h-1zM25 53h1v1h-1zM40 53h2v1h-2zM11 54h1v1h-1zM25 54h1v1h-1zM38 54h2v1h-2zM11 55h1v1h-1zM25 55h1v1h-1zM36 55h2v1h-2zM11 56h1v1h-1zM25 56h1v1h-1zM34 56h2v1h-2zM11 57h1v1h-1zM25 57h1v1h-1zM32 57h2v1h-2zM11 58h1v1h-1zM25 58h1v1h-1zM30 58h2v1h-2zM11 59h1v1h-1zM25 59h1v1h-1zM28 59h2v1h-2zM11 60h1v1h-1zM25 60h3v1h-3zM11 61h15v1h-15z"/></svg>
<div class="a" style="left:1228px;top:221px;width:80px;height:40px;background:#e13347;border:2.5px solid #a9a9a9;border-radius:3px"></div>
<div class="a" style="left:1370.5px;top:221px;width:79.5px;height:40px;background:#fff;border:2.5px solid #a9a9a9;border-radius:3px"></div>
<svg class="a" style="left:1322px;top:226px" width="34" height="28" viewBox="0 0 34 28"><path d="M2 6.7h30" stroke="#c0c0c0" stroke-width="1.5"/><path d="M1.5 6.7l8.5-4.4v8.8z M32.5 6.7l-8.5-4.4v8.8z" fill="#c0c0c0"/><rect x="2.4" y="16.6" width="30" height="9" rx="4.5" fill="#fff" stroke="#aaa" stroke-width="1"/><path d="M6.8 17.1h9.7v8h-9.7a4 4 0 0 1 0-8z" fill="#000"/></svg>
<div class="a bt" style="left:1276.0px;top:290px;width:39px;height:40px;border-radius:4px"><svg width="39" height="40" viewBox="0 0 39 40"><path d="M12 8.5H8.5V31H11M15 31.5h-0M17.5 8.5h-0" fill="none" stroke="#c8c8c8" stroke-width="1.2"/><path d="M28 8.5h2.8V31.5H24" fill="none" stroke="#c8c8c8" stroke-width="1.2"/><path d="M20 8v24" stroke="#c8c8c8" stroke-width="1.8" stroke-dasharray="1.8 1.6"/><path d="M7.8 32.3L30.8 8.3" stroke="#1a1a1a" stroke-width="3"/><path d="M7.8 32.3L30.8 8.3" stroke="#c8c8c8" stroke-width="1.3"/></svg></div>
<div class="a bt" style="left:1320.3px;top:290px;width:39px;height:40px;border-radius:4px"><svg width="39" height="40" viewBox="0 0 39 40"><path d="M8.5 12.5V8.5H30.8V11M8.5 22.5V24.5M11.5 31.5H30.8V24" fill="none" stroke="#c8c8c8" stroke-width="1.2"/><path d="M8 19.6h23" stroke="#c8c8c8" stroke-width="1.8" stroke-dasharray="1.8 1.6"/><path d="M7.8 32.3L30.8 8.3" stroke="#1a1a1a" stroke-width="3"/><path d="M7.8 32.3L30.8 8.3" stroke="#c8c8c8" stroke-width="1.3"/></svg></div>
<div class="a bt" style="left:1364.6px;top:290px;width:39px;height:40px;border-radius:4px"><svg width="39" height="40" viewBox="0 0 39 40"><path d="M7 20.5c-.5-3 1.5-5.5 4.5-6c3-.3 4.5 1.2 4.5 3.6" fill="none" stroke="#c8c8c8" stroke-width="1.9"/><path d="M32 18.5c.5 3-1.5 5.5-4.5 6c-3 .3-4.5-1.2-4.5-3.6" fill="none" stroke="#c8c8c8" stroke-width="1.9"/><path d="M8.8 32.5L32.2 8" stroke="#c8c8c8" stroke-width="1.3"/></svg></div>
<div class="a txt" style="left:1138px;top:364.6px;width:196px;text-align:center;transform-origin:50% 0">Left tool</div>
<div class="a txt" style="left:1180px;top:399px">Size:</div>
<div class="a bt" style="left:1216.5px;top:393px;width:59px;height:28px"></div>
<div class="a txt" style="left:1216.5px;top:399px;width:59px;text-align:center;transform-origin:50% 0">1 px</div>
<svg class="a" style="left:1278.5px;top:397px" width="14" height="20" viewBox="0 0 14 20"><path d="M1.5 8.3L7 3L12.5 8.3M1.5 11.7L7 17L12.5 11.7" fill="none" stroke="#c8c8c8" stroke-width="2"/></svg>
<div class="a" style="left:1181px;top:433.8px;width:112px;height:4.5px;background:#151515;border-radius:1px"></div>
<div class="a" style="left:1180px;top:433.8px;width:9px;height:4.5px;background:#555;border-radius:1px"></div>
<div class="a" style="left:1181px;top:428px;width:16px;height:16px;border-radius:50%;background:#1c1c1c;border:2px solid #5a5a5a"></div>
<div class="a" style="left:1184.8px;top:431.8px;width:8.4px;height:8.4px;border-radius:50%;background:#e8e8e8"></div>
<div class="a txt" style="left:1345.5px;top:364.6px;width:196px;text-align:center;transform-origin:50% 0">Right tool</div>
<div class="a" style="left:1382px;top:392.5px;width:39px;height:40px;background:#fff;border-radius:5px"></div>
<div class="a" style="left:1398px;top:409px;width:8.6px;height:8.6px;background:#000"></div>
<div class="a bt" style="left:1426px;top:393px;width:59px;height:39px"></div>
<div class="a txt" style="left:1426px;top:404.5px;width:59px;text-align:center;transform-origin:50% 0">1 px</div>
<svg class="a" style="left:1488.5px;top:403px" width="14" height="20" viewBox="0 0 14 20"><path d="M1.5 8.3L7 3L12.5 8.3M1.5 11.7L7 17L12.5 11.7" fill="none" stroke="#c8c8c8" stroke-width="2"/></svg>
<div class="a" style="left:1387px;top:444.8px;width:113px;height:4.5px;background:#151515;border-radius:1px"></div>
<div class="a" style="left:1386px;top:444.8px;width:10.5px;height:4.5px;background:#555;border-radius:1px"></div>
<div class="a" style="left:1388.5px;top:439px;width:16px;height:16px;border-radius:50%;background:#1c1c1c;border:2px solid #5a5a5a"></div>
<div class="a" style="left:1392.3px;top:442.8px;width:8.4px;height:8.4px;border-radius:50%;background:#e8e8e8"></div>
<div class="a txt" style="left:1345.5px;top:469px;width:196px;text-align:center;transform-origin:50% 0">Opacity:</div>
<div class="a bt" style="left:1404px;top:495px;width:59px;height:29px"></div>
<div class="a txt" style="left:1404px;top:501px;width:59px;text-align:center;transform-origin:50% 0">255</div>
<svg class="a" style="left:1466.3px;top:499.5px" width="14" height="20" viewBox="0 0 14 20"><path d="M1.5 8.3L7 3L12.5 8.3M1.5 11.7L7 17L12.5 11.7" fill="none" stroke="#c8c8c8" stroke-width="2"/></svg>
<div class="a" style="left:1387px;top:536.4px;width:113px;height:4.5px;background:#151515;border-radius:1px"></div>
<div class="a" style="left:1387px;top:536.4px;width:103px;height:4.5px;background:#555;border-radius:1px"></div>
<div class="a" style="left:1482px;top:530.6px;width:16px;height:16px;border-radius:50%;background:#1c1c1c;border:2px solid #5a5a5a"></div>
<div class="a" style="left:1485.8px;top:534.4px;width:8.4px;height:8.4px;border-radius:50%;background:#e8e8e8"></div>
<div class="a bt" style="left:1145.5px;top:784.5px;width:323px;height:28px"></div>
<svg class="a" style="left:1449px;top:792px" width="16" height="12" viewBox="0 0 16 12"><path d="M2 2.5l6 5.5l6-5.5" fill="none" stroke="#9a9a9a" stroke-width="1.8"/></svg>
<div class="a bt" style="left:1474px;top:784.5px;width:26.5px;height:28px"><svg width="26.5" height="28" viewBox="0 0 26.5 28"><g transform="translate(13.6 14.7) scale(1.17) translate(-13.6 -14)"><path d="M14 3.5c5.5 0 10 3.5 10 8c0 3-2 4.5-4 4.5c-2 0-3 .5-3.5 2l-.8 2.5c-.8 2-2.5 3-4.5 3c-4.5 0-8-4.5-8-10c0-5.5 5-10 10.8-10z" fill="#c8c8c8"/><circle cx="9" cy="13" r="2" fill="#111"/><circle cx="11.5" cy="8" r="2" fill="#111"/><circle cx="16.5" cy="6.3" r="2" fill="#111"/><circle cx="21" cy="9.5" r="2" fill="#111"/></g><path d="M16.5 22h2.2M20 22h2.2M23.5 22h2.2" stroke="#c8c8c8" stroke-width="2"/></svg></div>
<div class="a bt" style="left:1506.5px;top:784.5px;width:26.5px;height:28px"><svg width="26.5" height="28" viewBox="0 0 26.5 28"><g transform="translate(13.6 14.7) scale(1.17) translate(-13.6 -14)"><path d="M14 3.5c5.5 0 10 3.5 10 8c0 3-2 4.5-4 4.5c-2 0-3 .5-3.5 2l-.8 2.5c-.8 2-2.5 3-4.5 3c-4.5 0-8-4.5-8-10c0-5.5 5-10 10.8-10z" fill="#c8c8c8"/><circle cx="9" cy="13" r="2" fill="#111"/><circle cx="11.5" cy="8" r="2" fill="#111"/><circle cx="16.5" cy="6.3" r="2" fill="#111"/><circle cx="21" cy="9.5" r="2" fill="#111"/></g><path d="M22 17.5v8M18 21.5h8" stroke="#c8c8c8" stroke-width="2"/></svg></div>
<div class="a" style="left:1145px;top:819px;width:391px;height:1.2px;background:#3a3a3a"></div>
</div>
</body></html>
